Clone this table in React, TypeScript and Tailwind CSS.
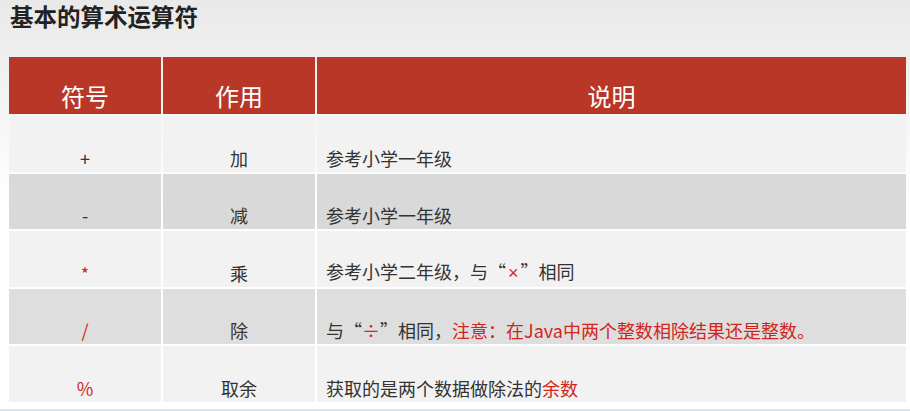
import React from "react";

type Row = {
  sym: React.ReactNode;
  use: string;
  desc: React.ReactNode;
  bg: string;
};

const red = "text-[#d0261c]";

const rows: Row[] = [
  {
    sym: "+",
    use: "加",
    desc: "参考小学一年级",
    bg: "bg-[#f2f2f2]",
  },
  {
    sym: "-",
    use: "减",
    desc: "参考小学一年级",
    bg: "bg-[#d9d9d9]",
  },
  {
    sym: <span className={red}>*</span>,
    use: "乘",
    desc: (
      <>
        参考小学二年级，与“
        <span className={`${red} px-[2px] font-['Liberation_Sans']`}>×</span>
        ”相同
      </>
    ),
    bg: "bg-[#f2f2f2]",
  },
  {
    sym: <span className={red}>/</span>,
    use: "除",
    desc: (
      <>
        与“<span className={red}>÷</span>”相同，
        <span className={red}>注意：在Java中两个整数相除结果还是整数。</span>
      </>
    ),
    bg: "bg-[#dedede]",
  },
  {
    sym: <span className={red}>%</span>,
    use: "取余",
    desc: (
      <>
        获取的是两个数据做除法的<span className={red}>余数</span>
      </>
    ),
    bg: "bg-[#f2f2f2]",
  },
];

const App = () => {
  return (
    <div
      className="w-[910px] h-[411px] overflow-hidden flex flex-col bg-gradient-to-b from-[#e9e9e9] via-white to-white"
      style={{ fontFamily: '"Noto Sans CJK SC", "Noto Sans", sans-serif' }}
    >
      {/* title */}
      <div className="h-[57px] px-[10px] pt-[5px] text-[23.5px] leading-none font-bold text-[#222]">
        基本的算术运算符
      </div>

      {/* table */}
      <div className="ml-[9px] w-[897px] grid grid-cols-[152px_152px_589px] grid-rows-[57px_56px_55px_56px_55px_56px] gap-[2px]">
        {["符号", "作用", "说明"].map((h) => (
          <div
            key={h}
            className="bg-[#b93726] text-white text-[24px] leading-none flex items-end justify-center pb-[6px]"
          >
            {h}
          </div>
        ))}
        {rows.map((r, i) => (
          <React.Fragment key={i}>
            <div
              className={`${r.bg} text-[#333] text-[18px] leading-none flex items-end justify-center pb-[5px]`}
            >
              {r.sym}
            </div>
            <div
              className={`${r.bg} text-[#333] text-[18px] leading-none flex items-end justify-center pb-[5px]`}
            >
              {r.use}
            </div>
            <div
              className={`${r.bg} text-[#333] text-[18px] leading-none flex items-end pl-[9px] pb-[5px] whitespace-nowrap`}
            >
              <span>{r.desc}</span>
            </div>
          </React.Fragment>
        ))}
      </div>

      <div className="mt-auto h-[2px] bg-[#d8e7f8]" />
    </div>
  );
};

export default App;
